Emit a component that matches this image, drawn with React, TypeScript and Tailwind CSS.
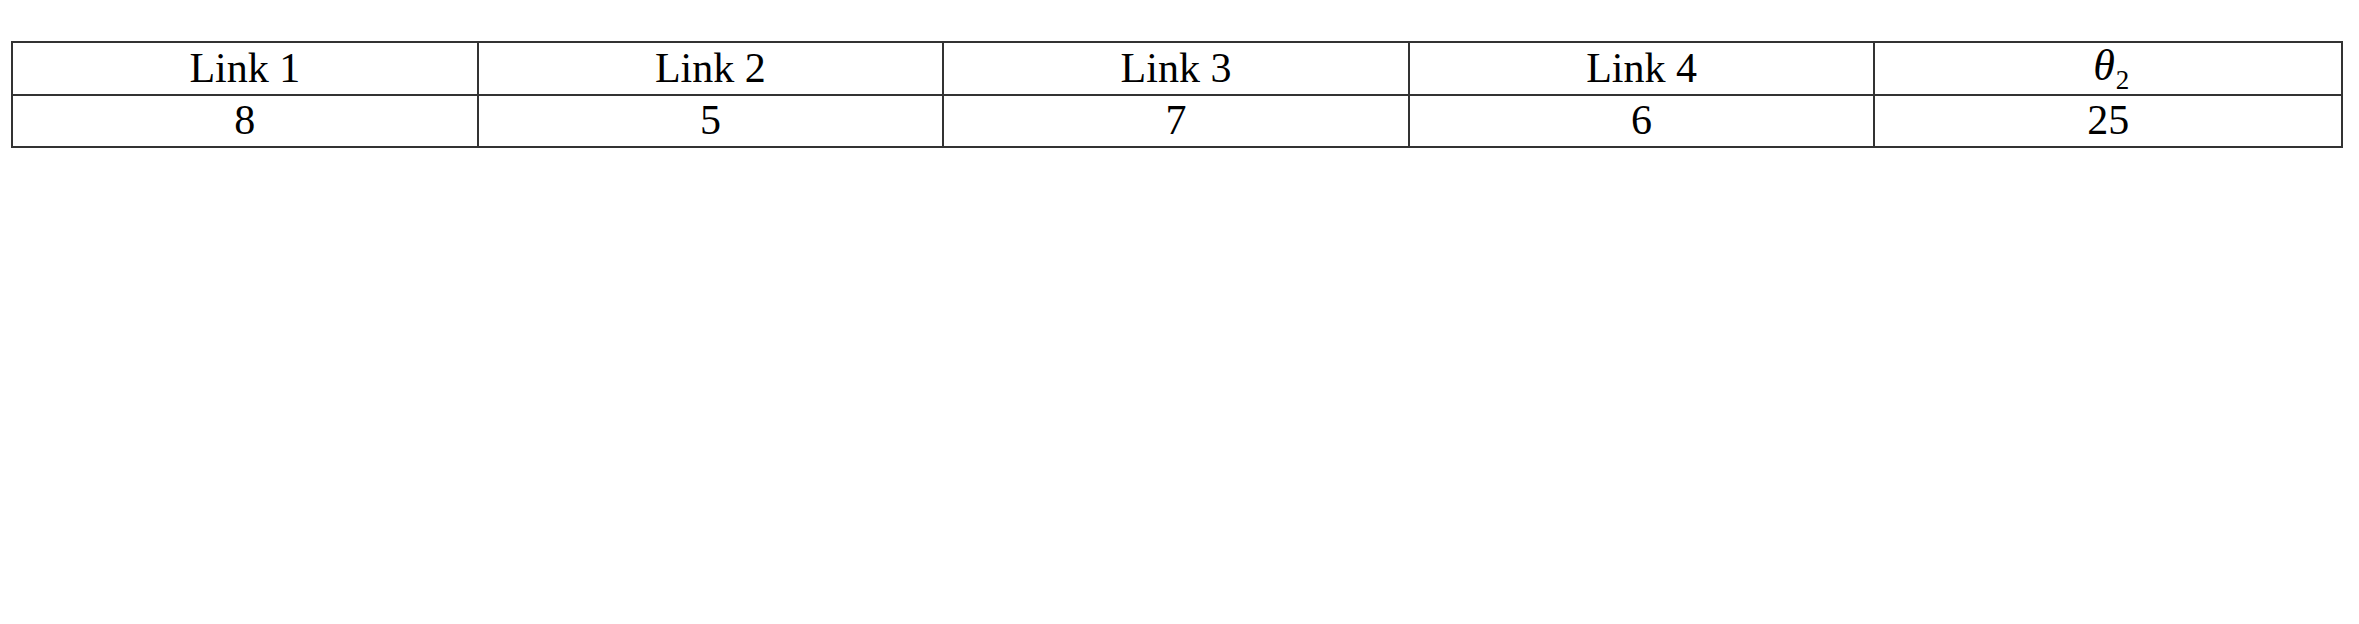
import React from 'react';

const headers = ['Link 1', 'Link 2', 'Link 3', 'Link 4'];
const values = ['8', '5', '7', '6', '25'];

const Cell: React.FC<{ last?: boolean; top?: boolean; children: React.ReactNode }> = ({ last, top, children }) => (
  <div
    className={`flex items-center justify-center text-[42px] leading-[48px] text-black whitespace-nowrap border-[#333] ${
      top ? 'h-[53px] border-b-2 pb-[1px]' : 'h-[50px] pb-[2px]'
    } ${last ? '' : 'border-r-2'}`}
  >
    {children}
  </div>
);

export default function App() {
  return (
    <div className="w-[2359px] h-[624px] bg-white pt-[41px] pl-[11px]" style={{ fontFamily: '"Liberation Serif", "Times New Roman", serif' }}>
      <div className="w-[2332px] border-2 border-[#333] grid grid-cols-5">
        {headers.map((h) => (
          <Cell key={h} top>
            {h}
          </Cell>
        ))}
        <Cell top last>
          {/* θ₂ */}
          <span className="ml-[6px]">
            <span className="italic text-[44px]">θ</span>
            <span className="ml-[1px] text-[27px] leading-none align-[-9px]">2</span>
          </span>
        </Cell>
        {values.map((v, i) => (
          <Cell key={i} last={i === values.length - 1}>
            {v}
          </Cell>
        ))}
      </div>
    </div>
  );
}
